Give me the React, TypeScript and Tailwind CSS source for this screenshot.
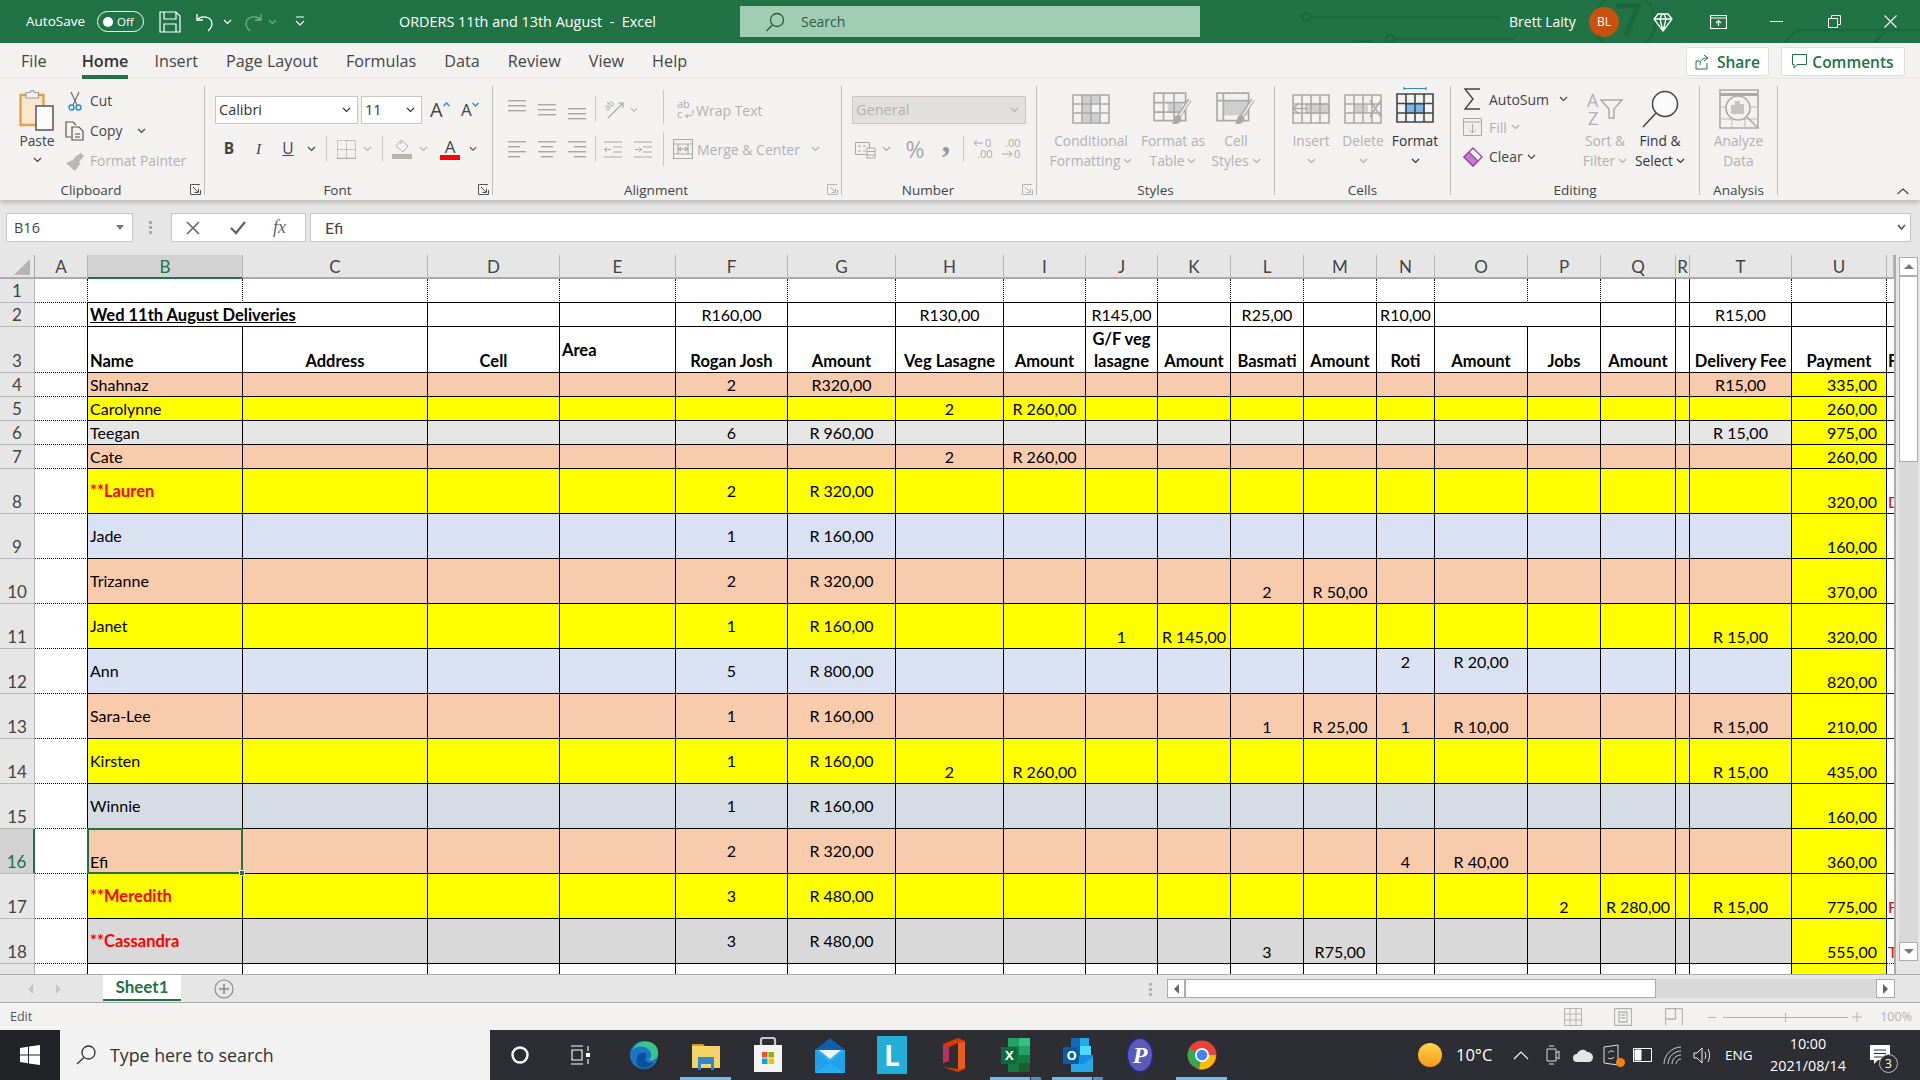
import React from 'react';

const columns = ['A', 'B', 'C', 'D', 'E', 'F', 'G', 'H', 'I', 'J', 'K', 'L', 'M', 'N', 'O', 'P', 'Q', 'R', 'T', 'U', 'V'];

type VAlign = 'c' | 'b' | 't';
type CellDef = string | [string, VAlign];
type RowDef = { n: number; bg: string; cells: Record<string, CellDef> };

const peach = 'bg-[#f8cbad]';
const yellow = 'bg-[#ffff00]';
const grey = 'bg-[#e7e6e6]';
const blue = 'bg-[#d9e1f2]';
const slate = 'bg-[#d6dce4]';
const white = 'bg-white';

const rows: RowDef[] = [
  { n: 1, bg: white, cells: {} },
  { n: 2, bg: white, cells: { B: 'Wed 11th August Deliveries', F: 'R160,00', H: 'R130,00', J: 'R145,00', L: 'R25,00', N: 'R10,00', T: 'R15,00' } },
  {
    n: 3,
    bg: white,
    cells: {
      B: 'Name', C: 'Address', D: 'Cell', E: ['Area', 'c'], F: 'Rogan Josh', G: 'Amount', H: 'Veg Lasagne', I: 'Amount',
      J: 'G/F veg\nlasagne', K: 'Amount', L: 'Basmati', M: 'Amount', N: 'Roti', O: 'Amount', P: 'Jobs', Q: 'Amount',
      T: 'Delivery Fee', U: 'Payment', V: 'F',
    },
  },
  { n: 4, bg: peach, cells: { B: 'Shahnaz', F: '2', G: 'R320,00', T: 'R15,00', U: '335,00' } },
  { n: 5, bg: yellow, cells: { B: 'Carolynne', H: '2', I: 'R 260,00', U: '260,00' } },
  { n: 6, bg: grey, cells: { B: 'Teegan', F: '6', G: 'R 960,00', T: 'R 15,00', U: '975,00' } },
  { n: 7, bg: peach, cells: { B: 'Cate', H: '2', I: 'R 260,00', U: '260,00' } },
  { n: 8, bg: yellow, cells: { B: ['**Lauren', 'c'], F: ['2', 'c'], G: ['R 320,00', 'c'], U: '320,00', V: 'D' } },
  { n: 9, bg: blue, cells: { B: ['Jade', 'c'], F: ['1', 'c'], G: ['R 160,00', 'c'], U: '160,00' } },
  { n: 10, bg: peach, cells: { B: ['Trizanne', 'c'], F: ['2', 'c'], G: ['R 320,00', 'c'], L: '2', M: 'R 50,00', U: '370,00' } },
  { n: 11, bg: yellow, cells: { B: ['Janet', 'c'], F: ['1', 'c'], G: ['R 160,00', 'c'], J: '1', K: 'R 145,00', T: 'R 15,00', U: '320,00' } },
  { n: 12, bg: blue, cells: { B: ['Ann', 'c'], F: ['5', 'c'], G: ['R 800,00', 'c'], N: ['2', 't'], O: ['R 20,00', 't'], U: '820,00' } },
  { n: 13, bg: peach, cells: { B: ['Sara-Lee', 'c'], F: ['1', 'c'], G: ['R 160,00', 'c'], L: '1', M: 'R 25,00', N: '1', O: 'R 10,00', T: 'R 15,00', U: '210,00' } },
  { n: 14, bg: yellow, cells: { B: ['Kirsten', 'c'], F: ['1', 'c'], G: ['R 160,00', 'c'], H: '2', I: 'R 260,00', T: 'R 15,00', U: '435,00' } },
  { n: 15, bg: slate, cells: { B: ['Winnie', 'c'], F: ['1', 'c'], G: ['R 160,00', 'c'], U: '160,00' } },
  { n: 16, bg: peach, cells: { B: 'Efi', F: ['2', 'c'], G: ['R 320,00', 'c'], N: '4', O: 'R 40,00', U: '360,00' } },
  { n: 17, bg: yellow, cells: { B: ['**Meredith', 'c'], F: ['3', 'c'], G: ['R 480,00', 'c'], P: '2', Q: 'R 280,00', T: 'R 15,00', U: '775,00', V: 'F' } },
  { n: 18, bg: 'bg-[#d9d9d9]', cells: { B: ['**Cassandra', 'c'], F: ['3', 'c'], G: ['R 480,00', 'c'], L: '3', M: 'R75,00', U: '555,00', V: 'T' } },
  { n: 19, bg: white, cells: {} },
];

const vClass: Record<VAlign, string> = { c: 'items-center', b: 'items-end', t: 'items-start pt-[2px]' };

function Chevron({ className = '' }: { className?: string }) {
  return (
    <svg width="9" height="6" viewBox="0 0 9 6" className={className} fill="none" stroke="currentColor" strokeWidth="1.2">
      <path d="M1 1l3.5 3.5L8 1" />
    </svg>
  );
}

function Lines({ widths, gap = 6, align = 'c' }: { widths: number[]; gap?: number; align?: 'l' | 'c' | 'r' }) {
  const w = Math.max(...widths);
  return (
    <svg width={w} height={gap * (widths.length - 1) + 2} fill="#a8a8a8">
      {widths.map((x, i) => (
        <rect key={i} x={align === 'l' ? 0 : align === 'r' ? w - x : (w - x) / 2} y={i * gap} width={x} height="1.4" />
      ))}
    </svg>
  );
}

function Launcher({ dim = false }: { dim?: boolean }) {
  return (
    <svg width="11" height="11" viewBox="0 0 11 11" fill="none" stroke={dim ? '#b4b4b4' : '#555'} strokeWidth="1">
      <path d="M.5 10V.5H10M3 3l5.5 5.5M8.5 4.5v4h-4M.5 10.5h10V6" />
    </svg>
  );
}

function Group({ w, label, launcher, children }: { w: string; label: string; launcher?: 'on' | 'dim'; children: React.ReactNode }) {
  return (
    <div className={`${w} flex h-[109px] flex-col border-r border-[#bcbcbc]`}>
      <div className="flex-1">{children}</div>
      <div className={`relative h-[14px] text-center text-[13.5px] leading-[18px] text-[#444] ${launcher ? 'pr-[22px]' : ''}`}>
        {label}
        {launcher && (
          <span className="absolute right-[3px] top-[3px]">
            <Launcher dim={launcher === 'dim'} />
          </span>
        )}
      </div>
    </div>
  );
}

function LargeBtn({ w, icon, lines, chevron = 'last', dark = false }: { w: string; icon: React.ReactNode; lines: string[]; chevron?: 'last' | 'below' | 'none'; dark?: boolean }) {
  return (
    <div className={`${w} flex flex-col items-center text-[13.8px] leading-[20px] ${dark ? 'text-[#333]' : 'text-[#b1b1b1]'}`}>
      <div className="flex h-[45px] items-center">{icon}</div>
      {lines.map((l, i) => (
        <div key={l} className="flex items-center gap-[3px] whitespace-pre">
          {l}
          {chevron === 'last' && i === lines.length - 1 && <Chevron />}
        </div>
      ))}
      {chevron === 'below' && (
        <div className="flex h-[20px] items-center">
          <Chevron />
        </div>
      )}
    </div>
  );
}

function GridIcon({ children }: { children?: React.ReactNode }) {
  return (
    <svg width="38" height="30" viewBox="0 0 38 30" fill="none">
      {children}
      <path d="M1 1h36v28H1zM1 10h36M1 19h36M10 1v28M19 1v28M28 1v28" stroke="#aaa" strokeWidth="1.6" />
    </svg>
  );
}

function Brush() {
  return (
    <g>
      <path d="M35 7L24 24" stroke="#aaa" strokeWidth="4" />
      <path d="M36 6L25 23" stroke="#f3f2f1" strokeWidth="1.5" />
      <path d="M18 30c5 1 9-1 9-5 0-3-4-4-6-2-1 2-1 5-3 7z" fill="#aaa" />
    </g>
  );
}

function Ribbon() {
  return (
    <div className="relative z-10 flex h-[121px] bg-[#f3f2f1] pt-[7px] shadow-[0_2px_5px_rgba(0,0,0,0.22)]">
      <Group w="w-[205px]" label="Clipboard" launcher="on">
        <div className="flex pl-[14px] text-[13.8px] text-[#444]">
          <div className="flex w-[46px] flex-col items-center">
            <svg width="36" height="42" viewBox="0 0 36 42" className="mt-[3px]" fill="none">
              <path d="M1.5 6h23v30h-23z" fill="#fbe7cc" stroke="#e8a04a" strokeWidth="2.4" />
              <path d="M7 6V3.5h4C11.500 1 15 1 15.500 3.500h4V6v3H7z" fill="#f3f2f1" stroke="#999" strokeWidth="1.2" />
              <path d="M17 17h17v24H17z" fill="#fafafa" stroke="#555" strokeWidth="1.5" />
            </svg>
            <div className="leading-[20px]">Paste</div>
            <Chevron className="mt-[6px]" />
          </div>
          <div className="flex flex-col">
            <div className="flex h-[30px] items-center">
              <span className="flex w-[30px] justify-center">
                <svg width="14" height="20" viewBox="0 0 14 20" fill="none">
                  <path d="M3 1l6 13M11 1L5 14" stroke="#666" strokeWidth="1.1" />
                  <circle cx="3.500" cy="16.500" r="2.500" stroke="#2b88d8" strokeWidth="1.4" />
                  <circle cx="10.500" cy="16.500" r="2.500" stroke="#2b88d8" strokeWidth="1.4" />
                </svg>
              </span>
              Cut
            </div>
            <div className="flex h-[30px] items-center">
              <span className="flex w-[30px] justify-center">
                <svg width="20" height="20" viewBox="0 0 20 20" fill="none" stroke="#555" strokeWidth="1.2">
                  <path d="M6 16H1V1h7l3 3" />
                  <path d="M7 6h7l4 4v9H7z" fill="#f3f2f1" />
                  <path d="M10 13h5M10 16h5" />
                </svg>
              </span>
              Copy
              <Chevron className="ml-[15px]" />
            </div>
            <div className="flex h-[30px] items-center text-[#b1b1b1]">
              <span className="flex w-[30px] justify-center">
                <svg width="20" height="19" viewBox="0 0 20 19" fill="#b8b8b8">
                  <path d="M10 5l6-4 3 3-5 6 1 2-5 7-9-8 7-3z" />
                </svg>
              </span>
              Format Painter
            </div>
          </div>
        </div>
      </Group>

      <Group w="w-[288px]" label="Font" launcher="on">
        <div className="flex items-center pl-[10px] pt-[10px]">
          <div className="flex h-[28px] w-[143px] items-center justify-between border border-[#c8c6c4] bg-white pl-[3px] pr-[6px] text-[14.5px] text-[#333]">
            Calibri
            <Chevron />
          </div>
          <div className="ml-[3px] flex h-[28px] w-[61px] items-center justify-between border border-[#c8c6c4] bg-white pl-[3px] pr-[6px] text-[14.5px] text-[#333]">
            11
            <Chevron />
          </div>
          <div className="ml-[8px] flex w-[26px] items-start text-[20px] leading-[20px] text-[#444]">
            A
            <svg width="7" height="5" className="mt-[2px]" fill="none" stroke="#2b88d8" strokeWidth="1.4">
              <path d="M.5 4L3.500 1l3 3" />
            </svg>
          </div>
          <div className="ml-[5px] flex w-[26px] items-start text-[17px] leading-[20px] text-[#444]">
            A
            <svg width="7" height="5" className="mt-[2px]" fill="none" stroke="#2b88d8" strokeWidth="1.4">
              <path d="M.5 1l3 3 3-3" />
            </svg>
          </div>
        </div>
        <div className="mt-[11px] flex h-[28px] items-center pl-[9px] text-[15.5px] text-[#444]">
          <span className="w-[30px] text-center font-bold">B</span>
          <span className="w-[29px] text-center font-['Liberation_Serif',serif] italic">I</span>
          <span className="w-[30px] text-center underline">U</span>
          <span className="flex w-[16px] justify-center"><Chevron /></span>
          <span className="flex w-[14px] justify-center"><span className="h-[26px] w-px bg-[#c8c8c8]" /></span>
          <span className="flex w-[26px] justify-center">
            <svg width="19" height="19" fill="none" stroke="#b0b0b0"><path d="M.5.5h18v18H.5zM9.500.5v18M.5 9.500h18" strokeDasharray="2 1" /><path d="M0 18.500h19" strokeWidth="1.500" /></svg>
          </span>
          <span className="flex w-[16px] justify-center text-[#b8b8b8]"><Chevron /></span>
          <span className="flex w-[14px] justify-center"><span className="h-[26px] w-px bg-[#c8c8c8]" /></span>
          <span className="flex w-[26px] flex-col items-center">
            <svg width="16" height="14" fill="none" stroke="#b0b0b0"><path d="M7 1l7 6-5 6-7-6zM7 1v4" /></svg>
            <span className="mt-[1px] h-[5px] w-[20px] bg-[#b8b4b0]" />
          </span>
          <span className="flex w-[16px] justify-center text-[#b8b8b8]"><Chevron /></span>
          <span className="flex w-[38px] flex-col items-center">
            <span className="text-[17px] leading-[15px]">A</span>
            <span className="mt-[1px] h-[5px] w-[20px] bg-[#ff0000]" />
          </span>
          <span className="flex w-[8px] justify-center"><Chevron /></span>
        </div>
      </Group>

      <Group w="w-[349px]" label="Alignment" launcher="dim">
        <div className="flex h-[38px] items-end pl-[9px] text-[14px] text-[#b1b1b1]">
          <div className="flex h-[28px] w-[30px] items-start justify-center pt-[4px]"><Lines widths={[18, 18, 18]} gap={5} /></div>
          <div className="flex h-[28px] w-[30px] items-center justify-center"><Lines widths={[18, 18, 18]} gap={5} /></div>
          <div className="flex h-[28px] w-[30px] items-end justify-center pb-[4px]"><Lines widths={[18, 18, 18]} gap={5} /></div>
          <span className="flex h-[28px] w-[6px] justify-center"><span className="h-[26px] w-px bg-[#c8c8c8]" /></span>
          <span className="flex h-[28px] w-[32px] items-center justify-center">
            <svg width="22" height="20" fill="none" stroke="#aaa" strokeWidth="1.2">
              <path d="M5 18L20 3M15 3h5v5" />
              <text x="2" y="9" fontSize="9" fill="#aaa" stroke="none" transform="rotate(-45 6 7)">ab</text>
            </svg>
          </span>
          <span className="flex h-[28px] w-[8px] items-center justify-center"><Chevron /></span>
          <span className="ml-[25px] h-[34px] w-px bg-[#c8c8c8]" />
          <div className="flex h-[28px] items-center pl-[12px]">
            <svg width="19" height="22" fill="none" stroke="#aaa">
              <text x="1" y="9" fontSize="11" fill="#aaa" stroke="none">ab</text>
              <text x="1" y="19" fontSize="11" fill="#aaa" stroke="none">c</text>
              <path d="M17 11v3c0 2-2 3-8 3M12 15l-2 2 2 2" />
            </svg>
            <span className="ml-[1px]">Wrap Text</span>
          </div>
        </div>
        <div className="mt-[11px] flex h-[28px] items-center pl-[9px] text-[14px] text-[#b1b1b1]">
          <div className="flex w-[30px] justify-center"><Lines widths={[18, 12, 18, 12]} gap={5} align="l" /></div>
          <div className="flex w-[30px] justify-center"><Lines widths={[18, 12, 18, 12]} gap={5} /></div>
          <div className="flex w-[30px] justify-center"><Lines widths={[18, 12, 18, 12]} gap={5} align="r" /></div>
          <span className="flex w-[6px] justify-center"><span className="h-[26px] w-px bg-[#c8c8c8]" /></span>
          <span className="flex w-[30px] justify-center">
            <svg width="18" height="17" fill="none" stroke="#aaa"><path d="M0 1h18M9 6h9M9 11h9M0 16h18M7 8.500H1M3 6L.5 8.500 3 11" /></svg>
          </span>
          <span className="flex w-[30px] justify-center">
            <svg width="18" height="17" fill="none" stroke="#aaa"><path d="M0 1h18M9 6h9M9 11h9M0 16h18M1 8.500h6M5 6l2.500 2.500L5 11" /></svg>
          </span>
          <span className="ml-[5px] h-[34px] w-px bg-[#c8c8c8]" />
          <span className="ml-[9px] w-[24px]">
            <svg width="20" height="20" fill="none" stroke="#aaa" strokeWidth="1.2"><path d="M.5.5h19v19H.5zM.5 5h19M.5 15h19M5 5v10M15 5v10M6 10h8M8 8l-2 2 2 2M12 8l2 2-2 2" /></svg>
          </span>
          <span>Merge &amp; Center</span>
          <Chevron className="ml-[11px]" />
        </div>
      </Group>

      <Group w="w-[195px]" label="Number" launcher="dim">
        <div className="pl-[10px] pt-[10px]">
          <div className="flex h-[28px] w-[174px] items-center justify-between border border-[#c8c6c4] bg-[#e1e0df] pl-[3px] pr-[6px] text-[14.5px] text-[#b1b1b1]">
            General
            <Chevron />
          </div>
        </div>
        <div className="mt-[11px] flex h-[28px] items-center pl-[10px] text-[#a8a8a8]">
          <span className="flex w-[26px] justify-center">
            <svg width="21" height="19" fill="none" stroke="#aaa"><path d="M.5 2.500h14v12H.5zM3 6h3M3 11h3M8 6h3M8 11h3" /><path d="M12 8h8v10h-8zM12 11.500h8M12 15h8" fill="#f3f2f1" /></svg>
          </span>
          <span className="flex w-[16px] justify-center"><Chevron /></span>
          <span className="w-[42px] text-center text-[23px] leading-[24px]">%</span>
          <span className="-mt-[16px] ml-[2px] w-[16px] text-center font-['Liberation_Serif',serif] text-[34px] font-bold leading-[30px] text-[#999]">,</span>
          <span className="flex w-[18px] justify-center"><span className="h-[26px] w-px bg-[#c8c8c8]" /></span>
          <svg width="24" height="24" fill="none" stroke="#aaa">
            <path d="M11 6H2M5 3L2 6l3 3" />
            <text x="13" y="10" fontSize="11" fill="#aaa" stroke="none">0</text>
            <text x="5" y="21" fontSize="11" fill="#aaa" stroke="none">.00</text>
          </svg>
          <svg width="24" height="24" className="ml-[4px]" fill="none" stroke="#aaa">
            <text x="5" y="10" fontSize="11" fill="#aaa" stroke="none">.00</text>
            <path d="M2 17h10M9 14l3 3-3 3" />
            <text x="14" y="21" fontSize="11" fill="#aaa" stroke="none">0</text>
          </svg>
        </div>
      </Group>

      <Group w="w-[238px]" label="Styles">
        <div className="flex pl-[11px]">
          <LargeBtn w="w-[86px]" lines={['Conditional', 'Formatting']} icon={<GridIcon><path d="M10 1h18v9H10zM10 10h9v9h-9zM10 19h18v10H10z" fill="#cfcfcf" /></GridIcon>} />
          <LargeBtn w="w-[78px]" lines={['Format as', 'Table']} icon={<svg width="40" height="34" viewBox="0 0 38 32" fill="none"><path d="M14 10h14v9H14z" fill="#cfcfcf" /><path d="M1 1h30v26H1zM1 10h30M1 19h30M10 1v26M20 1v26" stroke="#aaa" strokeWidth="1.6" /><Brush /></svg>} />
          <LargeBtn w="w-[48px]" lines={['Cell', 'Styles']} icon={<svg width="40" height="34" viewBox="0 0 38 32" fill="none"><path d="M7 8h24v14H7z" fill="#cfcfcf" /><path d="M1 1h30v26H1zM1 8h30M7 1v26" stroke="#aaa" strokeWidth="1.6" /><Brush /></svg>} />
        </div>
      </Group>

      <Group w="w-[176px]" label="Cells">
        <div className="flex pl-[10px]">
          <LargeBtn w="w-[52px]" lines={['Insert']} chevron="below" icon={<GridIcon><path d="M14 10h24v9H14z" fill="#cfcfcf" stroke="#aaa" /><path d="M1 14.500h14M7 9l-6 5.500L7 20" stroke="#aaa" strokeWidth="1.6" fill="#f3f2f1" /></GridIcon>} />
          <LargeBtn w="w-[52px]" lines={['Delete']} chevron="below" icon={<GridIcon><path d="M10 10h14v9H10z" fill="#cfcfcf" /><path d="M26 6l11 17M37 6L26 23" stroke="#aaa" strokeWidth="1.6" /></GridIcon>} />
          <LargeBtn w="w-[52px]" dark lines={['Format']} chevron="below" icon={
            <svg width="38" height="38" viewBox="0 0 38 38" fill="none" className="-mt-[8px]">
              <path d="M8 1v3M30 1v3M8 2.500h22" stroke="#2b88d8" strokeWidth="1.2" />
              <path d="M10 18h18v9H10z" fill="#7cb5e6" stroke="#106ebe" />
              <path d="M1 8h36v28H1zM1 17.500h36M1 27h36M10 8v28M19 8v28M28 8v28" stroke="#444" strokeWidth="1.6" />
            </svg>
          } />
        </div>
      </Group>

      <Group w="w-[249px]" label="Editing">
        <div className="flex">
          <div className="flex w-[128px] flex-col pl-[12px] text-[14px] text-[#444]">
            <div className="flex h-[26px] items-center">
              <span className="w-[26px]">
                <svg width="18" height="22" viewBox="0 0 18 22" fill="none" stroke="#444" strokeWidth="1.400"><path d="M17 1H2l8 10-8 10h15" /></svg>
              </span>
              AutoSum
              <Chevron className="ml-[10px]" />
            </div>
            <div className="flex h-[30px] items-center text-[#b1b1b1]">
              <span className="w-[26px]">
                <svg width="19" height="18" fill="#eee" stroke="#aaa"><path d="M.5.500h18v17H.5zM.5 4h18M9.500 6v9M6 11.500l3.500 3.500 3.500-3.500" /></svg>
              </span>
              Fill
              <Chevron className="ml-[4px]" />
            </div>
            <div className="flex h-[29px] items-center">
              <span className="w-[26px]">
                <svg width="20" height="20" fill="none"><path d="M10 1l9 9-9 9-9-9z" fill="#fff" stroke="#9c3fa8" strokeWidth="1.4" /><path d="M1 10l5-5 9 9-5 5z" fill="#c27bcb" stroke="#9c3fa8" strokeWidth="1.2" /></svg>
              </span>
              Clear
              <Chevron className="ml-[4px]" />
            </div>
          </div>
          <LargeBtn w="w-[52px]" lines={['Sort &', 'Filter']} icon={
            <svg width="38" height="36" fill="none" stroke="#aaa" strokeWidth="1.500">
              <text x="1" y="16" fontSize="18" fill="#b1b1b1" stroke="none">A</text>
              <text x="2" y="34" fontSize="18" fill="#b1b1b1" stroke="none">Z</text>
              <path d="M15 9h21l-8 9v9h-5v-9z" />
            </svg>
          } />
          <LargeBtn w="w-[58px]" dark lines={['Find &', 'Select']} icon={
            <svg width="38" height="38" viewBox="0 0 38 38" fill="none" stroke="#444" strokeWidth="1.500"><circle cx="24" cy="14" r="12.500" fill="#fafafa" /><path d="M15 23L2 37" /></svg>
          } />
        </div>
      </Group>

      <Group w="w-[78px]" label="Analysis">
        <LargeBtn w="w-full" lines={['Analyze', 'Data']} chevron="none" icon={
          <svg width="40" height="40" viewBox="0 0 40 40" fill="none" className="mt-[1px]">
            <path d="M1 1h38v38H1z" stroke="#aaa" strokeWidth="1.600" />
            <path d="M1 4h38v3H1z" fill="#aaa" />
            <path d="M1 30h38M13 30v9M26 30v9M1 18h38" stroke="#bbb" />
            <circle cx="19" cy="19" r="12" fill="#f3f2f1" stroke="#aaa" strokeWidth="1.600" />
            <path d="M12 16h4v9h-4zM16 12h5v13h-5zM21 15h4v10h-4z" fill="#c4c4c4" />
            <path d="M28 28l11 11" stroke="#aaa" strokeWidth="1.600" />
          </svg>
        } />
      </Group>

      <svg width="12" height="7" className="absolute left-[1897px] top-[109px]" fill="none" stroke="#444" strokeWidth="1.100">
        <path d="M.5 6L6 1l5.500 5" />
      </svg>
    </div>
  );
}

function TitleBar() {
  return (
    <div className="relative flex h-[43px] items-center overflow-hidden bg-[#217346] text-white">
      <svg width="1920" height="43" className="absolute left-0 top-0" fill="none" stroke="#1b683c" strokeWidth="2.500">
        <circle cx="1306" cy="17" r="4" />
        <path d="M1310 17h190" />
        <circle cx="1390" cy="39" r="4" />
        <path d="M1394 39h120" />
        <path d="M1340 60c0-16 20-24 36-16" />
        <circle cx="1625" cy="22" r="30" />
        <path d="M1616 6h22l-12 30" strokeWidth="5" />
        <path d="M1770 60l26-30h124M1860 60l26-30" />
      </svg>
      <div className="relative flex w-full items-center">
        <span className="ml-[26px] w-[71px] text-[13.500px]">AutoSave</span>
        <div className="flex h-[21px] w-[47px] items-center rounded-full border border-white pl-[5px]">
          <span className="h-[10px] w-[10px] rounded-full bg-white" />
          <span className="ml-[4px] text-[11.500px] leading-none">Off</span>
        </div>
        <svg width="22" height="22" viewBox="0 0 22 22" className="ml-[15px]" fill="none" stroke="#fff" strokeWidth="1.200">
          <path d="M1 1h16l4 4v16H1zM5 1v7h12V1M5 21v-8h12v8" />
        </svg>
        <svg width="20" height="20" viewBox="0 0 20 20" className="ml-[15px]" fill="none" stroke="#fff" strokeWidth="1.300">
          <path d="M1 2v6h6M1 8c4-5 15-4 15 4 0 3-2 5-4 7" />
        </svg>
        <Chevron className="ml-[7px]" />
        <svg width="20" height="20" viewBox="0 0 20 20" className="ml-[10px] opacity-40" fill="none" stroke="#fff" strokeWidth="1.300">
          <path d="M19 2v6h-6M19 8c-4-5-15-4-15 4 0 3 2 5 4 7" />
        </svg>
        <Chevron className="ml-[6px] opacity-40" />
        <svg width="10" height="11" viewBox="0 0 10 11" className="ml-[18px]" fill="none" stroke="#fff" strokeWidth="1.100">
          <path d="M1 1h8M1 5l4 4 4-4" />
        </svg>
        <span className="ml-[94px] w-[341px] whitespace-nowrap text-[14.400px]">ORDERS 11th and 13th August&nbsp; -&nbsp; Excel</span>
        <div className="flex h-[31px] w-[460px] items-center bg-[#a0cdb3] pl-[25px] text-[14px] text-[#315c44]">
          <svg width="20" height="20" viewBox="0 0 20 20" fill="none" stroke="#2a5a3e" strokeWidth="1.300">
            <circle cx="12" cy="8" r="6.500" />
            <path d="M7.500 13L1.500 19" />
          </svg>
          <span className="ml-[16px]">Search</span>
        </div>
        <span className="ml-[309px] w-[78px] text-[14px]">Brett Laity</span>
        <span className="ml-[2px] flex h-[30px] w-[30px] items-center justify-center rounded-full bg-[#ca5010] text-[12px]">BL</span>
        <svg width="20" height="20" viewBox="0 0 20 20" className="ml-[34px]" fill="none" stroke="#fff" strokeWidth="1.300">
          <path d="M5 2h10l4 5-9 12L1 7zM1 7h18M7 7l3 12 3-12M7 7l2-5M13 7l-2-5" />
        </svg>
        <svg width="17" height="14" viewBox="0 0 17 14" className="ml-[37px]" fill="none" stroke="#fff" strokeWidth="1.200">
          <path d="M.5.500h16v13H.5zM.5 3h16M8.500 11V5.500M6 8l2.500-2.500L11 8" />
        </svg>
        <span className="ml-[43px] h-px w-[13px] bg-white" />
        <svg width="13" height="13" viewBox="0 0 13 13" className="ml-[45px]" fill="none" stroke="#fff">
          <path d="M.5 3.500h9v9h-9zM3.500 3.500v-3h9v9h-3" />
        </svg>
        <svg width="13" height="13" viewBox="0 0 13 13" className="ml-[43px]" fill="none" stroke="#fff" strokeWidth="1.100">
          <path d="M.5.500l12 12M12.500.500l-12 12" />
        </svg>
      </div>
    </div>
  );
}

function TabBar() {
  const tabs = ['Insert', 'Page Layout', 'Formulas', 'Data', 'Review', 'View', 'Help'];
  return (
    <div className="flex h-[36px] items-start bg-[#f3f2f1] pl-[21px] text-[16.2px] leading-[22px] text-[#444]">
      <span className="mt-[7px]">File</span>
      <span className="ml-[35px] h-[36px] border-b-4 border-[#217346] pt-[7px] font-semibold text-[#333]">Home</span>
      <div className="ml-[26px] mt-[7px] flex gap-[28px]">
        {tabs.map(t => <span key={t}>{t}</span>)}
      </div>
      <div className="ml-auto mr-[15px] mt-[4px] flex gap-[12px] text-[15.5px] font-semibold text-[#217346]">
        <div className="flex h-[29px] w-[83px] items-center justify-center gap-[6px] rounded-[2px] border border-[#e1dfdd] bg-white">
          <svg width="16" height="16" viewBox="0 0 16 16" fill="none" stroke="#217346"><path d="M12 9v6H1V7h4M5 11c0-5 3-7 7-7M9 1l4 3-4 3" /></svg>
          Share
        </div>
        <div className="flex h-[29px] w-[124px] items-center justify-center gap-[5px] rounded-[2px] border border-[#e1dfdd] bg-white">
          <svg width="15" height="15" viewBox="0 0 15 15" fill="none" stroke="#217346"><path d="M.5.500h14v10H5L2 14v-3.500H.5z" /></svg>
          Comments
        </div>
      </div>
    </div>
  );
}

function FormulaBar() {
  return (
    <div className="flex h-[55px] items-start bg-[#e6e6e6] pl-[6px] pt-[13px] text-[#444]">
      <div className="flex h-[29px] w-[127px] items-center justify-between border border-[#c6c6c6] bg-white pl-[7px] pr-[8px] text-[14.500px]">
        B16
        <span className="h-0 w-0 border-x-[4px] border-t-[5px] border-x-transparent border-t-[#777]" />
      </div>
      <div className="ml-[16px] mt-[8px] flex w-[4px] flex-col gap-[2px]">
        <span className="h-[3px] w-[3px] bg-[#aaa]" />
        <span className="h-[3px] w-[3px] bg-[#aaa]" />
        <span className="h-[3px] w-[3px] bg-[#aaa]" />
      </div>
      <div className="ml-[18px] flex h-[29px] w-[135px] items-center border border-[#c6c6c6] bg-white text-[#666]">
        <svg width="14" height="14" viewBox="0 0 14 14" className="ml-[14px]" fill="none" stroke="#666" strokeWidth="1.600"><path d="M1 1l12 12M13 1L1 13" /></svg>
        <svg width="16" height="14" viewBox="0 0 16 14" className="ml-[30px]" fill="none" stroke="#666" strokeWidth="2.400"><path d="M1 7l5 5 9-11" /></svg>
        <span className="ml-[27px] font-['Liberation_Serif',serif] text-[18px] italic">fx</span>
      </div>
      <div className="ml-[4px] flex h-[29px] w-[1601px] items-center justify-between border border-[#c6c6c6] bg-white pl-[14px] pr-[4px] font-['Lato',sans-serif] text-[16px]">
        Efi
        <svg width="9" height="7" viewBox="0 0 9 7" fill="none" stroke="#555" strokeWidth="1.600"><path d="M1 1l3.500 4L8 1" /></svg>
      </div>
    </div>
  );
}

function Cell({ row, col }: { row: RowDef; col: string }) {
  const raw = row.cells[col];
  const text = Array.isArray(raw) ? raw[0] : raw;
  const v: VAlign = Array.isArray(raw) ? raw[1] : 'b';
  const head = row.n === 3;
  const red = text?.startsWith('**');
  const selected = row.n === 16 && col === 'B';
  const title = row.n === 2 && col === 'B';

  let bg = row.bg;
  if (col === 'U' && row.n > 3) bg = yellow;
  if (col === 'A' || col === 'V') bg = white;

  let just = 'justify-center';
  if (col === 'B' || col === 'E') just = 'justify-start pl-[2px]';
  if (col === 'U' && !head) just = 'justify-end pr-[9px]';
  if (col === 'V') just = 'justify-start pl-[1px]';

  let border = 'border-r border-b border-black';
  if (col === 'A') border = row.n === 1
    ? 'border-r border-b border-black [border-right-style:dotted] [border-bottom-style:dotted]'
    : 'border-r border-b border-black [border-bottom-style:dotted]';
  else if (row.n === 1 && col !== 'Q' && col !== 'R') border = 'border-r border-b border-black [border-right-style:dotted]';
  if (row.n === 2 && col === 'O') border = 'border-b border-black';
  if (col === 'V') border = row.n >= 18 ? 'border-b border-black [border-bottom-style:dotted]' : 'border-b border-black';

  const size = head || red || title ? 'font-bold text-[16.5px]' : 'text-[16px]';
  const color = red || (col === 'V' && !head) ? 'text-[#ff0000]' : 'text-black';

  return (
    <div className={`relative flex whitespace-pre text-center font-['Lato',sans-serif] leading-[22px] ${title ? 'col-span-2' : ''} ${col === 'V' ? 'overflow-hidden' : ''} ${bg} ${border} ${just} ${vClass[v]} ${size} ${color}`}>
      {title ? <span className="underline">{text}</span> : text}
      {selected && (
        <div className="absolute -left-px -top-px bottom-[-1px] right-[-1px] z-10 border-2 border-[#217346]">
          <span className="absolute -bottom-[4px] -right-[4px] h-[6px] w-[6px] border border-white bg-[#217346]" />
        </div>
      )}
    </div>
  );
}

function Sheet() {
  return (
    <div className="flex h-[719px] overflow-hidden bg-[#e6e6e6]">
      <div className="grid h-[761px] w-[1894px] grid-cols-[35px_53px_155px_185px_132px_116px_112px_108px_108px_82px_72px_73px_73px_73px_58px_93px_73px_75px_14px_102px_95px_7px] grid-rows-[24px_24px_24px_46px_24px_24px_24px_24px_45px_45px_45px_45px_45px_45px_45px_45px_45px_45px_45px_45px]">
        <div className="flex items-end justify-end border-b-2 border-r border-[#ababab] bg-[#e6e6e6] pb-[2px] pr-[4px]">
          <span className="h-0 w-0 border-b-[16px] border-l-[16px] border-b-[#b4b4b4] border-l-transparent" />
        </div>
        {columns.map(c => (
          <div
            key={c}
            className={`flex items-center justify-center border-r border-[#b8b8b8] font-['Lato',sans-serif] text-[17px] leading-none ${c === 'B' ? 'border-b-2 border-b-[#217346] bg-[#d2d2d2] text-[#217346]' : 'border-b-2 border-b-[#ababab] bg-[#e6e6e6] text-[#444]'}`}
          >
            {c === 'V' ? '' : c}
          </div>
        ))}
        {rows.map(row => (
          <React.Fragment key={row.n}>
            <div className={`flex items-end justify-center border-b border-r font-['Lato',sans-serif] text-[17px] leading-[22px] ${row.n === 16 ? 'border-r-2 border-b-[#b8b8b8] border-r-[#217346] bg-[#d2d2d2] text-[#217346]' : 'border-[#b8b8b8] bg-[#e6e6e6] text-[#444]'}`}>
              {row.n}
            </div>
            {columns
              .filter(c => !(row.n === 2 && c === 'C'))
              .map(c => <Cell key={c} row={row} col={c} />)}
          </React.Fragment>
        ))}
      </div>
      <div className="flex w-[26px] flex-col border-l-2 border-[#ababab] bg-[#e6e6e6] pl-[3px] pr-[2px] pt-[2px]">
        <div className="flex h-[704px] flex-col bg-[#d9d9d9]">
          <div className="flex h-[19px] items-center justify-center border border-[#ababab] bg-white">
            <span className="h-0 w-0 border-x-[5px] border-b-[5px] border-x-transparent border-b-[#777]" />
          </div>
          <div className="h-[186px] border border-[#ababab] bg-white" />
          <div className="mt-auto flex h-[19px] items-center justify-center border border-[#ababab] bg-white">
            <span className="h-0 w-0 border-x-[5px] border-t-[5px] border-x-transparent border-t-[#777]" />
          </div>
        </div>
      </div>
    </div>
  );
}

function SheetTabs() {
  return (
    <div className="flex h-[29px] items-start border-y border-[#ababab] bg-[#e6e6e6]">
      <span className="ml-[28px] mt-[9px] h-0 w-0 border-y-[5px] border-r-[5px] border-y-transparent border-r-[#c4c4c4]" />
      <span className="ml-[23px] mt-[9px] h-0 w-0 border-y-[5px] border-l-[5px] border-y-transparent border-l-[#c4c4c4]" />
      <div className="ml-[42px] flex h-[26px] w-[78px] items-center justify-center border-b-2 border-[#217346] bg-white font-['Lato',sans-serif] text-[17px] font-bold text-[#217346]">
        Sheet1
      </div>
      <svg width="20" height="20" viewBox="0 0 20 20" className="ml-[33px] mt-[4px]" fill="none" stroke="#8a8a8a" strokeWidth="1.200">
        <circle cx="10" cy="10" r="9" />
        <path d="M10 5v10M5 10h10" strokeWidth="1.500" />
      </svg>
      <div className="ml-[915px] mt-[8px] flex w-[4px] flex-col gap-[2px]">
        <span className="h-[3px] w-[3px] bg-[#b4b4b4]" />
        <span className="h-[3px] w-[3px] bg-[#b4b4b4]" />
        <span className="h-[3px] w-[3px] bg-[#b4b4b4]" />
      </div>
      <div className="ml-[14px] mt-[4px] flex h-[19px] w-[728px] bg-[#d9d9d9]">
        <div className="flex w-[18px] items-center justify-center border border-[#ababab] bg-white">
          <span className="h-0 w-0 border-y-[5px] border-r-[5px] border-y-transparent border-r-[#666]" />
        </div>
        <div className="w-[471px] border border-[#ababab] bg-white" />
        <div className="ml-auto flex w-[19px] items-center justify-center border border-[#ababab] bg-white">
          <span className="h-0 w-0 border-y-[5px] border-l-[5px] border-y-transparent border-l-[#666]" />
        </div>
      </div>
    </div>
  );
}

function StatusBar() {
  return (
    <div className="flex h-[27px] items-center bg-[#f3f2f1] pl-[10px] pt-[1px] text-[12.500px] text-[#555]">
      <span>Edit</span>
      <svg width="18" height="18" viewBox="0 0 18 18" className="ml-[1532px]" fill="none" stroke="#b4b4b4"><path d="M.5.500h17v17H.5zM6 .5v17M12 .5v17M.5 6h17M.5 12h17" /></svg>
      <svg width="18" height="18" viewBox="0 0 18 18" className="ml-[32px]" fill="none" stroke="#b4b4b4" strokeWidth="1.300"><path d="M.5.500h17v17H.5zM5 4h8v10H5zM7 7h4M7 10h4" /></svg>
      <svg width="18" height="18" viewBox="0 0 18 18" className="ml-[33px]" fill="none" stroke="#b4b4b4" strokeWidth="1.300"><path d="M.5 17.500V.5h17v17M.5 11h10V.5" /></svg>
      <span className="ml-[25px] h-px w-[8px] bg-[#b4b4b4]" />
      <div className="relative ml-[7px] h-px w-[125px] bg-[#b4b4b4]">
        <span className="absolute left-[62px] top-[-4px] h-[9px] w-px bg-[#b4b4b4]" />
      </div>
      <svg width="10" height="10" className="ml-[4px]" stroke="#b4b4b4"><path d="M5 0v10M0 5h10" /></svg>
      <span className="ml-[18px] text-[#b1b1b1]">100%</span>
    </div>
  );
}

function TaskIcon({ children, active, split }: { children: React.ReactNode; active?: boolean; split?: boolean }) {
  return (
    <div className="relative flex h-[50px] w-[62px] items-center justify-center">
      {children}
      {active && (
        <span className="absolute bottom-0 left-[5px] flex h-[3px] w-[51px]">
          <span className="flex-1 bg-[#76b9ed]" />
          {split && <span className="ml-px w-[10px] bg-[#4f8fc2]" />}
        </span>
      )}
    </div>
  );
}

function Taskbar() {
  return (
    <div className="flex h-[50px] items-center bg-[#2d2e33] text-white">
      <div className="flex h-full w-[60px] items-center justify-center bg-[#222327]">
        <svg width="20" height="20" viewBox="0 0 20 20" fill="#fff"><path d="M0 3l8-1.200V9.500H0zM9 1.600L20 0v9.500H9zM0 10.500h8v7.700L0 17zM9 10.500h11V20L9 18.400z" /></svg>
      </div>
      <div className="flex h-full w-[430px] items-center bg-[#f2f2f2] pl-[16px] font-['Open_Sans',sans-serif] text-[17.800px] text-[#333]">
        <svg width="20" height="20" viewBox="0 0 20 20" fill="none" stroke="#333" strokeWidth="1.300"><circle cx="12.500" cy="7.500" r="6.500" /><path d="M8 12.500L1 19" /></svg>
        <span className="ml-[14px]">Type here to search</span>
      </div>
      <svg width="20" height="20" viewBox="0 0 20 20" className="ml-[20px]" fill="none" stroke="#fff" strokeWidth="2.400"><circle cx="10" cy="10" r="7.500" /></svg>
      <svg width="20" height="20" viewBox="0 0 20 20" className="ml-[40px]" fill="none" stroke="#fff" strokeWidth="1.100"><path d="M1 1h12M1 19h12M2 5h10v10H2zM18 1v5M18 14v5" /><path d="M16.500 8.500h3v3h-3z" fill="#fff" /></svg>
      <div className="ml-[23px] flex">
        <TaskIcon>
          <svg width="30" height="30" viewBox="0 0 30 30">
            <circle cx="15" cy="15" r="14" fill="#1b76c7" />
            <path d="M3 11C6 3 14 0 21 2c6 2 9 7 8 13-1 4-5 6-9 5 3-3 3-8-1-11C14 5 6 6 3 11z" fill="#38c48d" />
            <path d="M8 17c1-4 5-5 9-4 1 3-1 7-1 7 2 3 6 3 9 2-3 5-9 7-14 5-3-2-5-6-3-10z" fill="#0c4f9d" />
          </svg>
        </TaskIcon>
        <TaskIcon active>
          <svg width="30" height="30" viewBox="0 0 30 30">
            <path d="M1 4h11l2 2h-13z" fill="#d99a1c" />
            <path d="M1 6h28v22H1z" fill="#f6d365" />
            <path d="M7 17h16v13h-3v-6H10v6H7z" fill="#2f86d1" />
          </svg>
        </TaskIcon>
        <TaskIcon>
          <svg width="30" height="36" viewBox="0 0 30 36">
            <path d="M8 8V3a2 2 0 012-2h10a2 2 0 012 2v5" fill="none" stroke="#c8c8c8" strokeWidth="2.200" />
            <path d="M1 8h28v27H1z" fill="#f4f4f4" />
            <path d="M9 15h5.500v5.500H9z" fill="#f25022" />
            <path d="M15.500 15H21v5.500h-5.500z" fill="#7fba00" />
            <path d="M9 21.500h5.500V27H9z" fill="#00a4ef" />
            <path d="M15.500 21.500H21V27h-5.500z" fill="#ffb900" />
          </svg>
        </TaskIcon>
        <TaskIcon>
          <svg width="30" height="36" viewBox="0 0 30 36">
            <path d="M15 1L0 13h30z" fill="#0f5fb0" />
            <path d="M0 13h30v23H0z" fill="#27aef0" />
            <path d="M4 13h22l-11 9z" fill="#f2f2f2" />
            <path d="M0 13l15 13 15-13v23L15 26 0 36z" fill="#1d9ae6" opacity=".7" />
          </svg>
        </TaskIcon>
        <TaskIcon>
          <div className="flex h-[38px] w-[30px] items-center justify-center bg-[#22aed8] font-['Open_Sans',sans-serif] text-[28px] font-bold text-white">L</div>
        </TaskIcon>
        <TaskIcon>
          <svg width="24" height="36" viewBox="0 0 24 36">
            <path d="M1 7L16 1l7 3v28l-7 3-15-5 15 2V6L7 10v14l-6 2z" fill="#d83b01" />
            <path d="M1 7l6 3v14l-6 2z" fill="#b7325f" />
            <path d="M16 6v26l7-1V5z" fill="#e85c1c" />
          </svg>
        </TaskIcon>
        <TaskIcon active split>
          <svg width="30" height="36" viewBox="0 0 30 36">
            <path d="M7 1h22v34H7z" fill="#107c41" />
            <path d="M18 1h11v8.500H18z" fill="#33c481" />
            <path d="M18 9.500h11V18H18z" fill="#21a366" />
            <path d="M7 1h11v8.500H7z" fill="#21a366" />
            <path d="M18 26h11v9H18z" fill="#185c37" />
            <path d="M0 10h16v17H0z" fill="#0e6b38" />
            <text x="4" y="23" fontSize="13" fontWeight="700" fill="#fff">X</text>
          </svg>
        </TaskIcon>
        <TaskIcon active split>
          <svg width="30" height="36" viewBox="0 0 30 36">
            <path d="M8 1h18v16H8z" fill="#0f6cbd" />
            <path d="M17 1h9v8h-9z" fill="#28a8ea" />
            <path d="M17 9h11v9H17z" fill="#50d9ff" />
            <path d="M8 18h22v17H8z" fill="#1490df" />
            <path d="M8 20l11 8 11-8v15H8z" fill="#28a8ea" />
            <path d="M0 10h16v17H0z" fill="#0a5ca8" />
            <text x="3.500" y="23" fontSize="13" fontWeight="700" fill="#fff">O</text>
          </svg>
        </TaskIcon>
        <TaskIcon>
          <div className="flex h-[36px] w-[28px] items-center justify-center rounded-[50%] border-2 border-[#2a2a78] bg-[#5a5ab8] font-['Liberation_Serif',serif] text-[24px] font-bold italic text-white">P</div>
        </TaskIcon>
        <TaskIcon active>
          <svg width="30" height="30" viewBox="0 0 30 30">
            <circle cx="15" cy="15" r="14.500" fill="#ea4335" />
            <path d="M15 15L2.500 8.500a14.500 14.500 0 001 15L12 29.500z" fill="#34a853" />
            <path d="M15 15h14a14.500 14.500 0 01-17 14.200z" fill="#fbbc05" />
            <circle cx="15" cy="15" r="7" fill="#fff" />
            <circle cx="15" cy="15" r="5.300" fill="#4285f4" />
          </svg>
        </TaskIcon>
      </div>
      <div className="ml-[185px] h-[24px] w-[24px] rounded-full bg-gradient-to-b from-[#ffd24a] to-[#f79a14]" />
      <span className="ml-[14px] w-[44px] font-['Open_Sans',sans-serif] text-[16.500px]">10°C</span>
      <svg width="16" height="9" viewBox="0 0 16 9" className="ml-[13px]" fill="none" stroke="#fff" strokeWidth="1.100"><path d="M1 8l7-7 7 7" /></svg>
      <svg width="14" height="20" viewBox="0 0 14 20" className="ml-[17px]" fill="none" stroke="#ddd"><path d="M1 4h9v12H1zM10 8l3-2v8l-3-2M3 1h5M3 19h5" /></svg>
      <svg width="20" height="14" viewBox="0 0 20 14" className="ml-[13px]" fill="#e4e4e4"><path d="M4 14a4 4 0 010-8c1-4 8-6 10-2 3 0 6 2 6 5s-2 5-4 5z" /></svg>
      <div className="relative ml-[10px]">
        <svg width="20" height="22" viewBox="0 0 20 22" fill="none" stroke="#ddd"><path d="M1 3l14-2v20L1 19zM5 9c1-2 4-3 6-1M11 13c-1 2-4 2-6 1" /></svg>
        <span className="absolute -bottom-[1px] -right-[2px] h-[9px] w-[9px] rounded-full bg-[#f7830f]" />
      </div>
      <svg width="19" height="14" viewBox="0 0 19 14" className="ml-[10px]" fill="none" stroke="#fff"><path d="M.5.500h18v13H.5z" /><path d="M2 2h6v10H2z" fill="#fff" /></svg>
      <svg width="19" height="19" viewBox="0 0 19 19" className="ml-[11px]" fill="none" stroke="#ccc"><path d="M1 18C1 9 9 1 18 1M5 18c0-7 6-13 13-13M9 18c0-5 4-9 9-9M13 18c0-2 2-5 5-5" /></svg>
      <svg width="17" height="19" viewBox="0 0 17 19" className="ml-[11px]" fill="none" stroke="#eee"><path d="M1 7h3l5-5v15l-5-5H1zM12 6c1 2 1 5 0 7M15 3c2 4 2 9 0 13" /></svg>
      <span className="ml-[15px] w-[30px] whitespace-nowrap font-['Open_Sans',sans-serif] text-[13.500px]">ENG</span>
      <div className="ml-[9px] flex w-[88px] flex-col items-center font-['Open_Sans',sans-serif] text-[14.300px] leading-[22px]">
        <span>10:00</span>
        <span>2021/08/14</span>
      </div>
      <div className="relative ml-[18px]">
        <svg width="20" height="20" viewBox="0 0 20 20" fill="#fff"><path d="M0 0h20v15H8l-4 4v-4H0z" /><path d="M4 5h12M4 8.500h12M4 12h12" stroke="#2d2e33" /></svg>
        <span className="absolute -bottom-[8px] left-[9px] flex h-[19px] w-[19px] items-center justify-center rounded-full border border-[#bbb] bg-[#2d2e33] font-['Open_Sans',sans-serif] text-[12px]">3</span>
      </div>
    </div>
  );
}

export default function App() {
  return (
    <div className="flex h-[1080px] w-[1920px] flex-col overflow-hidden font-['Open_Sans',sans-serif]">
      <TitleBar />
      <TabBar />
      <Ribbon />
      <FormulaBar />
      <Sheet />
      <SheetTabs />
      <StatusBar />
      <Taskbar />
    </div>
  );
}
